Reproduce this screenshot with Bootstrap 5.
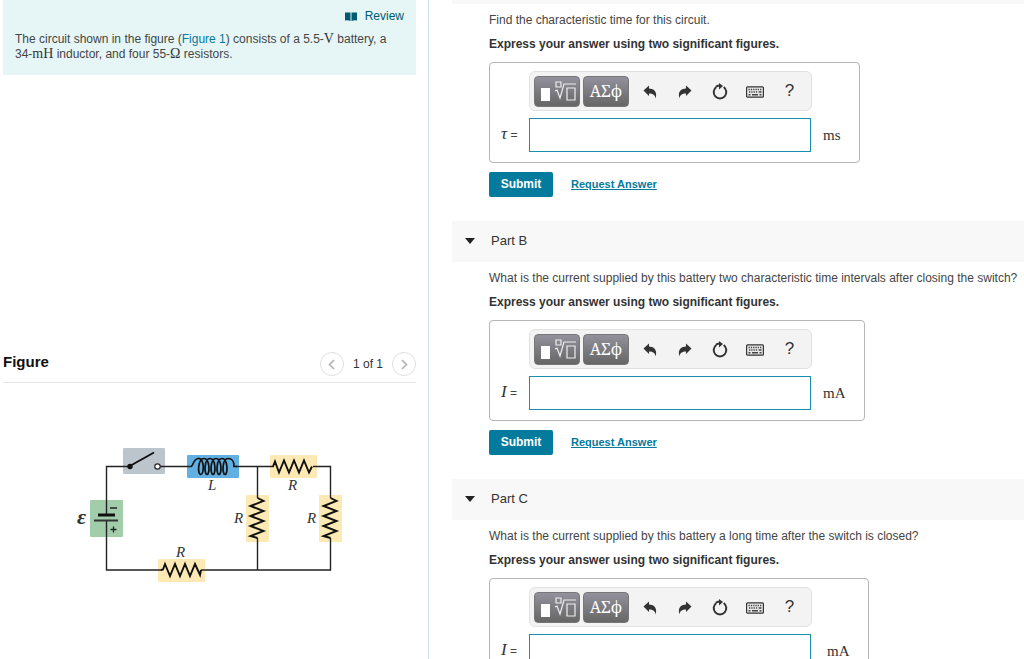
<!DOCTYPE html>
<html lang="en">
<head>
<meta charset="utf-8">
<meta name="viewport" content="width=device-width, initial-scale=1">
<title>RL circuit</title>
<link href="https://cdn.jsdelivr.net/npm/bootstrap@5.3.0/dist/css/bootstrap.min.css" rel="stylesheet">
<style>
  body { font-family: "Liberation Sans", Arial, sans-serif; font-size: 12px; line-height: 15px; color: #454545; background: #fff; }
  a { color: #047a9c; }
  .math { font-family: "Liberation Serif", "Times New Roman", serif; font-size: 15px; line-height: 14px; color: #333; }
  .intro .math { font-size: 14px; }
  .problem-pane { flex: 0 0 42%; max-width: 429px; border-right: 1px solid #cddfea; padding: 0 12px 0 3px; }
  .intro { background: #e6f6f7; height: 75px; padding: 9px 12px 0; }
  .review { color: #005a70; }
  .figure-head { margin-top: 277px; height: 31px; border-bottom: 1px solid #e5e5e5; }
  .figure-head h2 { font-size: 15px; line-height: 20px; color: #111; }
  .pager { gap: 9px; color: #333; }
  .pager button { width: 24px; height: 24px; border: 1px solid #e0e0e0; color: #b0b0b0; background: #fff; }
  .circuit { margin: 57px 0 0 67px; }
  .circuit text { font-family: "Liberation Serif", serif; font-style: italic; font-size: 15px; fill: #333; }
  .circuit .emf { font-size: 22px; font-weight: 700; }
  .parts-pane { padding-left: 23px; min-width: 0; }
  .part-head { height: 41px; background: #f8f8f8; color: #333; padding: 0 0 2px 13px; gap: 16px; }
  .part-head h3 { font-size: 13px; line-height: 16px; font-weight: 400; }
  .part-head.tail { height: 4px; }
  .part-body { padding: 8px 0 24px 37px; }
  .part-body p { line-height: 16px; margin: 0 0 8px; }
  .part-body .hint { color: #333; margin-bottom: 10px; }
  .answer { display: inline-grid; grid-template-columns: 39px 283px auto; row-gap: 7px; align-items: center; border: 1px solid #b5b5b5; border-radius: 4px; padding: 8px 18px 10px 0; vertical-align: top; }
  .tools { grid-column: 2; height: 40px; background: #f3f3f3; border: 1px solid #e2e2e2; border-radius: 6px; padding-left: 4px; }
  .tools button { border: 0; padding: 0; background: none; color: #333; }
  .tools .key { width: 46px; height: 31px; border-radius: 4px; border: 1px solid #777; background: linear-gradient(#93919c, #666); color: #fff; margin-right: 3px; font-family: "Noto Serif", "Liberation Serif", serif; font-size: 16px; line-height: 24px; }
  .tools .tool { width: 35px; height: 30px; font-size: 17px; line-height: 30px; }
  .lab { grid-column: 1; padding-left: 11px; }
  .lab .math { font-size: 17px; }
  .answer input { height: 34px; border: 1px solid #1b8eae; border-radius: 0; background: #fff; width: 282px; padding: 4px 8px; }
  .unit { padding-left: 11px; }
  .unit.wide { padding-left: 15px; }
  .submit { width: 64px; height: 25px; background: #047a9c; color: #fff; font-size: 12px; line-height: 15px; font-weight: 700; padding: 0; border: 0; border-radius: 2px; }
  .request { font-size: 11px; font-weight: 700; }
  .actions { margin-top: 9px; gap: 18px; }
</style>
</head>
<body>
<svg class="d-none" aria-hidden="true">
  <symbol id="undo" viewBox="0 0 14 14"><path d="M.5 5.500 6 .5v3c5.500.2 8.500 4 6.500 10-.2-3.500-2.500-5-6.500-5v2.500z" fill="#333"/></symbol>
  <symbol id="redo" viewBox="0 0 14 14"><path d="M13.500 5.500 8 .5v3C2.500 3.700-.5 7.500 1.500 13.500c.2-3.500 2.500-5 6.500-5v2.500z" fill="#333"/></symbol>
  <symbol id="reset" viewBox="0 0 16 17"><path d="M4.300 4A6.300 6.300 0 1 0 11.700 4" fill="none" stroke="#333" stroke-width="2"/><path d="M4 3.600Q6 2.600 8 2.600" fill="none" stroke="#333" stroke-width="2"/><path d="M7 0l4 3-4 3.500z" fill="#333"/></symbol>
  <symbol id="keys" viewBox="0 0 18 12"><rect x=".6" y=".8" width="16.800" height="10.400" rx="1" fill="#e9e9e9" stroke="#333" stroke-width="1.200"/><path d="M2.500 3.500h13M3 6h9.500" stroke="#444" stroke-width="1.400" stroke-dasharray="1.300 1"/><path d="M13 6h2.500M2.500 8.700h2M6 8.700h6M13.500 8.700h2" stroke="#444" stroke-width="1.400"/></symbol>
  <symbol id="template" viewBox="0 0 38 24"><path d="M3 8h9v13H3z" fill="#fff"/><path d="M18 2h5v5h-5zM17 11l2-1 3 8 4-14h12M29 8h8v12h-8z" fill="none" stroke="#eee" stroke-width="1.200"/></symbol>
</svg>
<div class="d-flex vh-100 overflow-hidden">
  <aside class="problem-pane overflow-hidden">
    <section class="intro">
      <div class="d-flex justify-content-end">
        <a href="#" class="review text-decoration-none d-flex align-items-center gap-2">
          <svg width="12" height="9" viewBox="0 0 12 9"><path d="M0 .5h5.500V9Q3 8 0 8.500zM6.500.5H12v8Q9 8 6.500 9z" fill="#005a70"/></svg><span>Review</span></a>
      </div>
      <p class="mb-0 mt-2">The circuit shown in the figure (<a href="#" class="text-decoration-none">Figure 1</a>) consists of a 5.5-<span class="math">V</span> battery, a 34-<span class="math">mH</span> inductor, and four 55-<span class="math">Ω</span> resistors.</p>
    </section>
    <section>
      <div class="figure-head d-flex justify-content-between align-items-start">
        <h2 class="fw-bold mb-0">Figure</h2>
        <div class="pager d-flex align-items-center">
          <button type="button" class="rounded-circle p-0 d-flex align-items-center justify-content-center" aria-label="Previous"><svg width="7" height="11" viewBox="0 0 7 11"><path d="M6 1 1.500 5.500 6 10" fill="none" stroke="currentColor" stroke-width="1.600"/></svg></button>
          <span>1 of 1</span>
          <button type="button" class="rounded-circle p-0 d-flex align-items-center justify-content-center" aria-label="Next"><svg width="7" height="11" viewBox="0 0 7 11"><path d="M1 1 5.500 5.500 1 10" fill="none" stroke="currentColor" stroke-width="1.600"/></svg></button>
        </div>
      </div>
      <svg class="circuit d-block" width="280" height="150" viewBox="70 440 280 150" role="img" aria-label="Circuit diagram">
        <rect x="123" y="448" width="42" height="26" rx="1" fill="#bcc4cc"/>
        <rect x="187" y="455" width="52" height="23" rx="1" fill="#62b0e2"/>
        <rect x="90" y="500" width="33" height="37" rx="1" fill="#a2cdab"/>
        <g fill="#fde9b4"><rect x="270" y="455" width="47" height="23" rx="1"/><rect x="246" y="495" width="23" height="47" rx="1"/><rect x="319" y="495" width="23" height="47" rx="1"/><rect x="158" y="559" width="47" height="23" rx="1"/></g>
        <g fill="none" stroke="#222" stroke-width="1.400">
          <path d="M106.500 514V466.500H130M160 466.500H191M236 466.500H274M313 466.500H330.500V498M330.500 538V570H201M162 570H106.500V521M257.500 466.500V498M257.500 538V570"/>
        </g>
        <g fill="none" stroke="#111" stroke-width="1.900" stroke-linejoin="miter">
          <path d="M273 466.500l2-5 4 11 5-12 5 12 5-12 5 12 5-12 5 12 3-6"/>
          <path d="M161 570l2-.5 2-5.500 5 12 5-12 5 12 5-12 5 12 5-12 5 11 1-5"/>
          <path id="vres" d="M257.500 498l6 3-13 5 13 5-13 5 13 5-13 5 13 5-13 5 7 2"/>
          <use href="#vres" x="73"/>
          <path stroke-width="1.700" d="M191 466.500c2 0 2-7 7-8 7-1 6 16 3 16-4 0-3-16 3-16s6 16 3 16-3-16 3-16 6 16 3 16-3-16 3-16 6 16 3 16-3-16 3-16 6 16 3 16-3-16 3-16c5 0 6 3 6 8h3"/>
          <path d="M129 466.500l25-14"/>
        </g>
        <circle cx="130" cy="466.500" r="2.700" fill="#111"/><circle cx="157.500" cy="466.500" r="2.700" fill="#fff" stroke="#222" stroke-width="1.200"/>
        <path d="M98 515h17" stroke="#111" stroke-width="3"/><path d="M94 520.500h24" stroke="#333" stroke-width="2"/>
        <path d="M110 508h7M110.500 529.500h6M113.500 526.500v6" stroke="#222" stroke-width="1.300"/>
        <text x="77" y="524" class="emf">ε</text>
        <text x="208" y="490">L</text><text x="288" y="490">R</text><text x="234" y="523">R</text><text x="307" y="523">R</text><text x="176" y="557">R</text>
      </svg>
    </section>
  </aside>
  <main class="parts-pane flex-grow-1 overflow-hidden">
    <section>
      <div class="part-head tail"></div>
      <div class="part-body">
        <p>Find the characteristic time for this circuit.</p>
        <p class="hint fw-bold">Express your answer using two significant figures.</p>
        <div class="answer">
          <div class="tools d-flex align-items-center">
            <button type="button" class="key" aria-label="Templates"><svg width="38" height="24"><use href="#template"/></svg></button>
            <button type="button" class="key">ΑΣϕ</button>
            <button type="button" class="tool" aria-label="Undo"><svg width="14" height="14"><use href="#undo"/></svg></button>
            <button type="button" class="tool" aria-label="Redo"><svg width="14" height="14"><use href="#redo"/></svg></button>
            <button type="button" class="tool" aria-label="Reset"><svg width="16" height="17"><use href="#reset"/></svg></button>
            <button type="button" class="tool" aria-label="Keyboard"><svg width="18" height="12"><use href="#keys"/></svg></button>
            <button type="button" class="tool">?</button>
          </div>
          <label class="lab" for="tau"><i class="math">τ</i> =</label>
          <input type="text" id="tau">
          <span class="unit math">ms</span>
        </div>
        <div class="actions d-flex align-items-center">
          <button type="button" class="btn submit">Submit</button><a href="#" class="request">Request Answer</a>
        </div>
      </div>
    </section>
    <section>
      <div class="part-head d-flex align-items-center">
        <svg width="10" height="6" viewBox="0 0 10 6"><path d="M0 0h10L5 6z" fill="#222"/></svg><h3 class="mb-0">Part B</h3>
      </div>
      <div class="part-body">
        <p>What is the current supplied by this battery two characteristic time intervals after closing the switch?</p>
        <p class="hint fw-bold">Express your answer using two significant figures.</p>
        <div class="answer">
          <div class="tools d-flex align-items-center">
            <button type="button" class="key" aria-label="Templates"><svg width="38" height="24"><use href="#template"/></svg></button>
            <button type="button" class="key">ΑΣϕ</button>
            <button type="button" class="tool" aria-label="Undo"><svg width="14" height="14"><use href="#undo"/></svg></button>
            <button type="button" class="tool" aria-label="Redo"><svg width="14" height="14"><use href="#redo"/></svg></button>
            <button type="button" class="tool" aria-label="Reset"><svg width="16" height="17"><use href="#reset"/></svg></button>
            <button type="button" class="tool" aria-label="Keyboard"><svg width="18" height="12"><use href="#keys"/></svg></button>
            <button type="button" class="tool">?</button>
          </div>
          <label class="lab" for="ib"><i class="math">I</i> =</label>
          <input type="text" id="ib">
          <span class="unit math">mA</span>
        </div>
        <div class="actions d-flex align-items-center">
          <button type="button" class="btn submit">Submit</button><a href="#" class="request">Request Answer</a>
        </div>
      </div>
    </section>
    <section>
      <div class="part-head d-flex align-items-center">
        <svg width="10" height="6" viewBox="0 0 10 6"><path d="M0 0h10L5 6z" fill="#222"/></svg><h3 class="mb-0">Part C</h3>
      </div>
      <div class="part-body">
        <p>What is the current supplied by this battery a long time after the switch is closed?</p>
        <p class="hint fw-bold">Express your answer using two significant figures.</p>
        <div class="answer">
          <div class="tools d-flex align-items-center">
            <button type="button" class="key" aria-label="Templates"><svg width="38" height="24"><use href="#template"/></svg></button>
            <button type="button" class="key">ΑΣϕ</button>
            <button type="button" class="tool" aria-label="Undo"><svg width="14" height="14"><use href="#undo"/></svg></button>
            <button type="button" class="tool" aria-label="Redo"><svg width="14" height="14"><use href="#redo"/></svg></button>
            <button type="button" class="tool" aria-label="Reset"><svg width="16" height="17"><use href="#reset"/></svg></button>
            <button type="button" class="tool" aria-label="Keyboard"><svg width="18" height="12"><use href="#keys"/></svg></button>
            <button type="button" class="tool">?</button>
          </div>
          <label class="lab" for="ic"><i class="math">I</i> =</label>
          <input type="text" id="ic">
          <span class="unit wide math">mA</span>
        </div>
      </div>
    </section>
  </main>
</div>
<script src="https://cdn.jsdelivr.net/npm/bootstrap@5.3.0/dist/js/bootstrap.bundle.min.js"></script>
</body>
</html>
